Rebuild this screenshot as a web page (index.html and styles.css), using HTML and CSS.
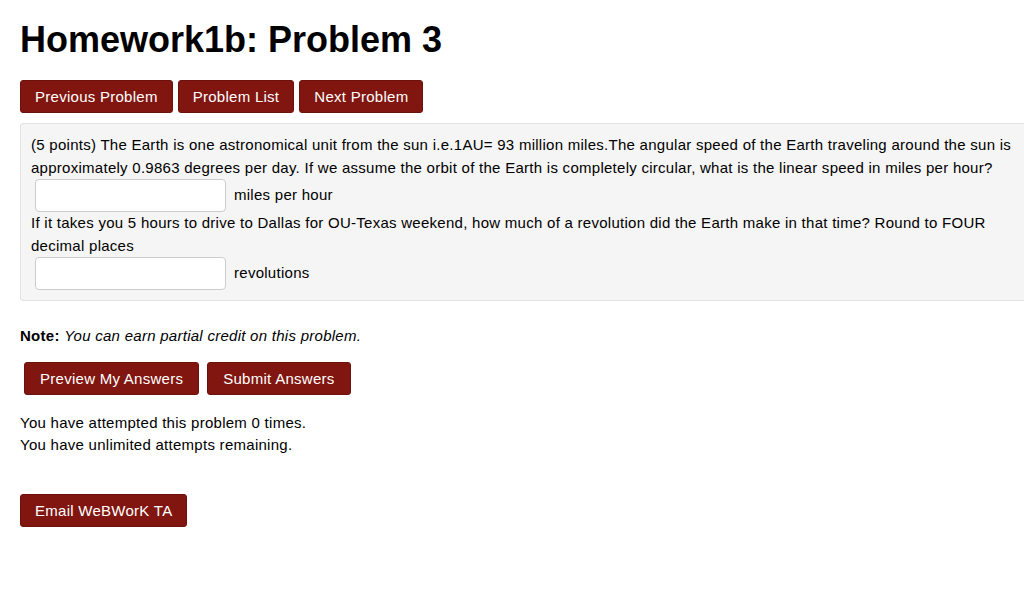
FILE: index.html
```html
<!DOCTYPE html>
<html>
<head>
<meta charset="utf-8">
<link rel="stylesheet" href="styles.css">
</head>
<body>
<h1 class="title">Homework1b: Problem 3</h1>
<div class="nav">
  <a class="btn">Previous Problem</a>
  <a class="btn">Problem List</a>
  <a class="btn">Next Problem</a>
</div>
<div class="problem">
  <div class="text">(5 points) The Earth is one astronomical unit from the sun i.e.1AU= 93 million miles.The angular speed of the Earth traveling around the sun is approximately 0.9863 degrees per day. If we assume the orbit of the Earth is completely circular, what is the linear speed in miles per hour?</div>
  <div class="answer"><span class="input"></span><span>miles per hour</span></div>
  <div class="text">If it takes you 5 hours to drive to Dallas for OU-Texas weekend, how much of a revolution did the Earth make in that time? Round to FOUR decimal places</div>
  <div class="answer"><span class="input"></span><span>revolutions</span></div>
</div>
<p class="note"><b>Note:</b> <i>You can earn partial credit on this problem.</i></p>
<div class="submit">
  <a class="btn">Preview My Answers</a>
  <a class="btn">Submit Answers</a>
</div>
<div class="attempts">
  <div>You have attempted this problem 0 times.</div>
  <div>You have unlimited attempts remaining.</div>
</div>
<div class="email">
  <a class="btn">Email WeBWorK TA</a>
</div>
</body>
</html>
```
FILE: styles.css
```css
html { overflow: hidden; }
body {
  margin: 0;
  padding: 0 0 0 20px;
  font-family: "Liberation Sans", Arial, sans-serif;
  font-size: 15px;
  letter-spacing: 0.27px;
  color: #000;
  background: #fff;
}
.title {
  margin: 20px 0 0 0;
  font-size: 36px;
  line-height: 40px;
  font-weight: bold;
  letter-spacing: 0;
}
.nav {
  display: flex;
  gap: 5px;
  margin-top: 20px;
}
.btn {
  display: inline-flex;
  align-items: center;
  height: 33px;
  box-sizing: border-box;
  padding: 0 14px;
  background: #80160f;
  border: 1px solid #6b120c;
  border-radius: 3px;
  color: #fff;
  font-size: 15px;
  white-space: nowrap;
}
.problem {
  margin-top: 10px;
  width: 1000px;
  padding: 10px 10px 10px 10px;
  background: #f5f5f5;
  border: 1px solid #e3e3e3;
  border-radius: 3px;
  line-height: 22.5px;
}
.answer {
  display: flex;
  align-items: center;
  gap: 8px;
  height: 33px;
  padding-left: 4px;
}
.input {
  display: block;
  width: 191px;
  height: 33px;
  box-sizing: border-box;
  background: #fff;
  border: 1px solid #ccc;
  border-radius: 4px;
}
.note {
  margin: 24px 0 0 0;
  line-height: 22px;
}
.submit {
  display: flex;
  gap: 8px;
  margin-top: 15px;
  padding-left: 4px;
}
.submit .btn {
  padding: 0 15px;
}
.attempts {
  margin-top: 17px;
  line-height: 22px;
}
.email {
  margin-top: 38px;
  display: flex;
}
```
